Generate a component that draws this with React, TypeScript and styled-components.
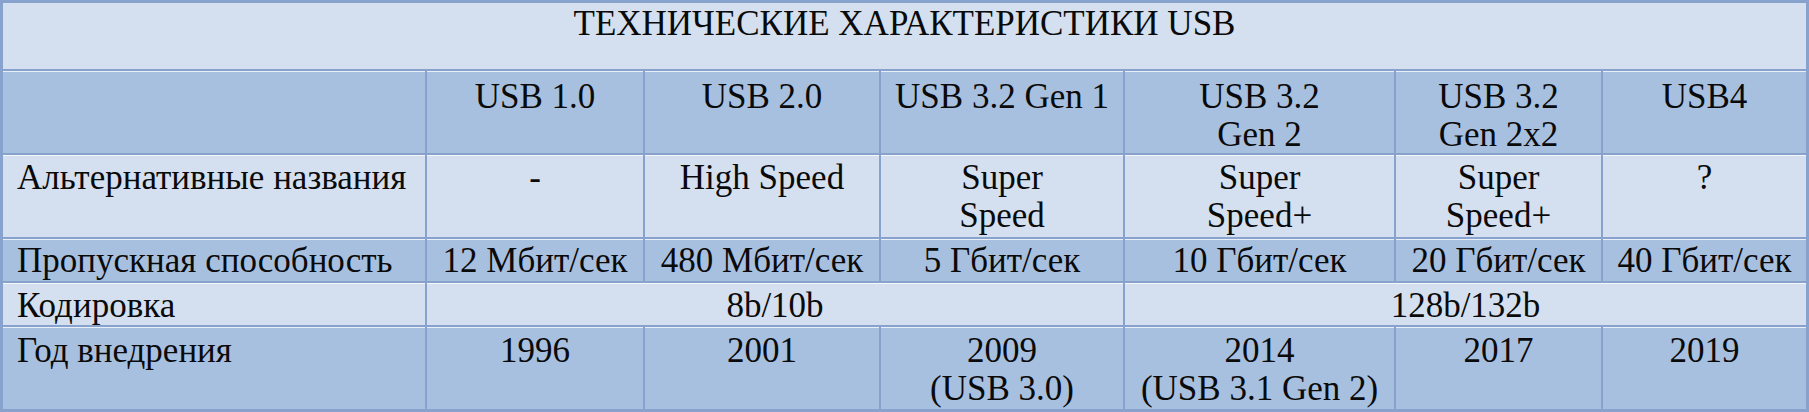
import { Fragment } from "react";
import styled, { createGlobalStyle } from "styled-components";

// ================================================
//              Styles
// ================================================
const GlobalStyle = createGlobalStyle`
  html, body {
    margin: 0;
    padding: 0;
    background: #ffffff;
  }
`;

const Table = styled.div`
  width: 1809px;
  height: 412px;
  box-sizing: border-box;
  display: grid;
  grid-template-columns: 422px 216px 234px 242px 269px 205px 203px;
  grid-template-rows: 66px 82px 82px 42px 42px 82px;
  gap: 2px;
  background: #86a2cd;
  border: 3px solid #86a2cd;
  font-family: "Liberation Serif", "Times New Roman", serif;
  font-size: 35px;
  line-height: 38px;
  color: #0a0a0a;
`;

const Cell = styled.div<{ dark?: boolean; span?: number; left?: boolean; padTop: number }>`
  grid-column: span ${(p) => p.span ?? 1};
  background: ${(p) => (p.dark ? "#a8c0df" : "#d4e0ef")};
  box-shadow: inset 0 1px 0 rgba(255, 255, 255, 0.75);
  padding: ${(p) => p.padTop}px ${(p) => (p.left ? "0 0 14px" : "0")};
  text-align: ${(p) => (p.left ? "left" : "center")};
  white-space: nowrap;
  min-height: 0;
`;

const Title = styled.div`
  grid-column: 1 / -1;
  background: #d4e0ef;
  padding-top: 2px;
  text-align: center;
`;

// ================================================
//              Data
// ================================================
type Row = {
  label: string;
  dark: boolean;
  pad: number;
  cells: { text: string[]; span?: number }[];
};

const rows: Row[] = [
  {
    label: "",
    dark: true,
    pad: 7,
    cells: [
      { text: ["USB 1.0"] },
      { text: ["USB 2.0"] },
      { text: ["USB 3.2 Gen 1"] },
      { text: ["USB 3.2", "Gen 2"] },
      { text: ["USB 3.2", "Gen 2x2"] },
      { text: ["USB4"] },
    ],
  },
  {
    label: "Альтернативные названия",
    dark: false,
    pad: 4,
    cells: [
      { text: ["-"] },
      { text: ["High Speed"] },
      { text: ["Super", "Speed"] },
      { text: ["Super", "Speed+"] },
      { text: ["Super", "Speed+"] },
      { text: ["?"] },
    ],
  },
  {
    label: "Пропускная способность",
    dark: true,
    pad: 3,
    cells: [
      { text: ["12 Мбит/сек"] },
      { text: ["480 Мбит/сек"] },
      { text: ["5 Гбит/сек"] },
      { text: ["10 Гбит/сек"] },
      { text: ["20 Гбит/сек"] },
      { text: ["40 Гбит/сек"] },
    ],
  },
  {
    label: "Кодировка",
    dark: false,
    pad: 4,
    cells: [
      { text: ["8b/10b"], span: 3 },
      { text: ["128b/132b"], span: 3 },
    ],
  },
  {
    label: "Год внедрения",
    dark: true,
    pad: 5,
    cells: [
      { text: ["1996"] },
      { text: ["2001"] },
      { text: ["2009", "(USB 3.0)"] },
      { text: ["2014", "(USB 3.1 Gen 2)"] },
      { text: ["2017"] },
      { text: ["2019"] },
    ],
  },
];

// ================================================
//              App
// ================================================
const App = () => {
  return (
    <>
      <GlobalStyle />
      <Table>
        <Title>ТЕХНИЧЕСКИЕ ХАРАКТЕРИСТИКИ USB</Title>
        {rows.map((row, i) => (
          <Fragment key={i}>
            <Cell dark={row.dark} left padTop={row.pad}>
              {row.label}
            </Cell>
            {row.cells.map((c, j) => (
              <Cell key={j} dark={row.dark} span={c.span} padTop={row.pad}>
                {c.text.map((t, k) => (
                  <div key={k}>{t}</div>
                ))}
              </Cell>
            ))}
          </Fragment>
        ))}
      </Table>
    </>
  );
};

export default App;
